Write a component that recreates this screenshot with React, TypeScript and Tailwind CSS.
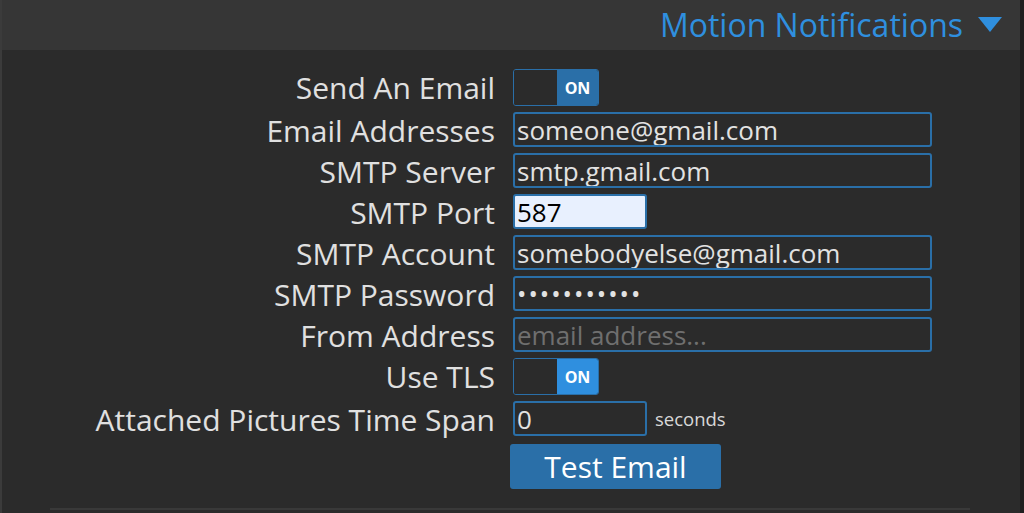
import React from "react";

const font = { fontFamily: '"Open Sans", "DejaVu Sans", sans-serif' };

type Row = { label: string; kind: "toggle" | "text" | "short" | "password" | "placeholder"; value?: string; bright?: boolean; autofill?: boolean; suffix?: string };

const rows: Row[] = [
  { label: "Send An Email", kind: "toggle" },
  { label: "Email Addresses", kind: "text", value: "someone@gmail.com" },
  { label: "SMTP Server", kind: "text", value: "smtp.gmail.com" },
  { label: "SMTP Port", kind: "short", value: "587", autofill: true },
  { label: "SMTP Account", kind: "text", value: "somebodyelse@gmail.com" },
  { label: "SMTP Password", kind: "password", value: "•••••••••••" },
  { label: "From Address", kind: "placeholder", value: "email address..." },
  { label: "Use TLS", kind: "toggle", bright: true },
  { label: "Attached Pictures Time Span", kind: "short", value: "0", suffix: "seconds" },
];

function Toggle({ bright }: { bright?: boolean }) {
  return (
    <div className="flex h-[37px] w-[86px] overflow-hidden rounded-[3px] border border-[#2a6fa8]">
      <div className="w-[43px] bg-[#2b2b2b]" />
      <div
        className={`flex flex-1 items-center justify-center text-[16px] font-bold text-white ${bright ? "bg-[#2f8fdf]" : "bg-[#2a6fa8]"}`}
      >
        ON
      </div>
    </div>
  );
}

function Field({ row }: { row: Row }) {
  if (row.kind === "toggle") return <Toggle bright={row.bright} />;
  const width = row.kind === "short" ? "w-[134px]" : "w-[419px]";
  const colors = row.autofill
    ? "bg-[#e8f0fe] text-black"
    : row.kind === "placeholder"
      ? "bg-[#2b2b2b] text-[#6f6f6f]"
      : "bg-[#2b2b2b] text-[#e2e2e2]";
  return (
    <div className="flex items-center gap-2">
      <div
        className={`flex h-[35px] ${width} items-center overflow-hidden rounded-[3px] border-2 border-[#2a6fa8] px-[2px] leading-none ${colors} ${row.kind === "password" ? "text-[25px] tracking-[2px]" : "pt-[1px] text-[26px]"}`}
      >
        {row.value}
      </div>
      {row.suffix && <span className="text-[18.5px] text-[#d8d8d8]">{row.suffix}</span>}
    </div>
  );
}

export default function App() {
  return (
    <div className="flex h-[513px] w-[1024px] flex-col overflow-hidden bg-[#2b2b2b]" style={font}>
      <div className="flex h-full border-l-2 border-r-4 border-l-[#3b3b3b] border-r-[#1f1f1f]">
        <div className="flex flex-1 flex-col">
          <div className="flex h-[50px] items-center justify-end gap-[15px] bg-[#363636] pr-[18px]">
            <span className="text-[32px] leading-none text-[#2f8fdf]">Motion Notifications</span>
            <svg width="24" height="16" viewBox="0 0 24 16">
              <polygon points="0,0 24,0 12,15" fill="#2f8fdf" />
            </svg>
          </div>
          <div className="flex flex-1 flex-col pt-[19px]">
            <div className="grid grid-cols-[493px_1fr] gap-x-[18px] gap-y-[6px]">
              {rows.map((r) => (
                <React.Fragment key={r.label}>
                  <div className="flex h-[35px] items-center justify-end pt-[3px] text-[30px] leading-none text-[#e0e0e0]">{r.label}</div>
                  <div className="flex items-center">
                    <Field row={r} />
                  </div>
                </React.Fragment>
              ))}
              <div />
              <div className="-ml-[3px] pt-[2px]">
                <button className="h-[45px] w-[211px] rounded-[3px] bg-[#2a6fa8] text-[30px] leading-none text-white">Test Email</button>
              </div>
            </div>
            <div className="mt-auto mb-[3px] ml-[48px] mr-[50px] h-[2px] bg-[#393939]" />
          </div>
        </div>
      </div>
    </div>
  );
}
